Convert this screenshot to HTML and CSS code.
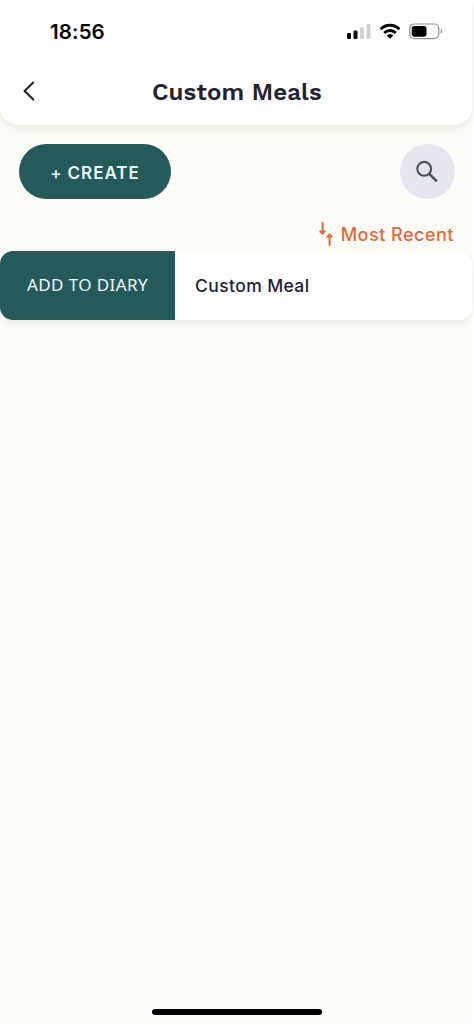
FILE: index.html
```
<!DOCTYPE html>
<html lang="en">
<head>
<meta charset="utf-8">
<title>Custom Meals</title>
<link rel="stylesheet" href="styles.css">
</head>
<body>
<div class="screen">
  <header class="header">
    <div class="status">
      <span class="time">18:56</span>
      <svg class="status-icons" width="98" height="20" viewBox="0 0 98 20">
        <rect x="1" y="13" width="4" height="6" rx="1.3"/>
        <rect x="7.5" y="10.5" width="4" height="8.5" rx="1.3"/>
        <rect x="14" y="7" width="4" height="12" rx="1.3" fill="#d0d0d0"/>
        <rect x="20.5" y="4" width="4" height="15" rx="1.3" fill="#d0d0d0"/>
        <g fill="none" stroke="#000" stroke-width="2.8">
          <path d="M34.6 9.2a13.2 13.2 0 0 1 18.8 0"/>
          <path d="M38.2 12.9a8.2 8.2 0 0 1 11.6 0"/>
        </g>
        <path d="M40.7 15.5a4.8 4.8 0 0 1 6.6 0L44 18.8z"/>
        <rect x="63.8" y="4" width="29" height="14.6" rx="4.4" fill="none" stroke="#929292" stroke-width="1.2"/>
        <rect x="65.7" y="5.9" width="14.8" height="10.8" rx="2.4"/>
        <path d="M94.6 9v4.8c2-.8 2-4 0-4.8z" fill="#999"/>
      </svg>
    </div>
    <div class="nav">
      <svg class="back" width="16" height="24" viewBox="0 0 16 24"><path d="M13.2 3.6 4.6 12l8.6 8.6" fill="none" stroke="#1f2233" stroke-width="2.1" stroke-linecap="round" stroke-linejoin="round"/></svg>
      <h1 class="title">Custom Meals</h1>
    </div>
  </header>
  <main class="content">
    <div class="actions">
      <button class="create"><span class="plus">+</span>CREATE</button>
      <button class="search" aria-label="Search">
        <svg width="26" height="26" viewBox="0 0 26 26" fill="none" stroke="#4b505b"><circle cx="10.2" cy="9.8" r="6.9" stroke-width="2.1"/><path d="m15 14.6 7.9 7.8" stroke-width="2.7"/></svg>
      </button>
    </div>
    <div class="sort">
      <svg width="18" height="26" viewBox="0 0 18 26" fill="none" stroke="#e2683f" stroke-width="2" stroke-linecap="round" stroke-linejoin="round"><path d="M5.6 2v10M12.6 24V14"/><path d="M2.8 10.2h5.6l-2.8 2.8zM9.8 15.8h5.6l-2.8-2.8z" fill="#e2683f" stroke-width="1.2"/></svg>
      <span class="sort-label">Most Recent</span>
    </div>
    <div class="meal">
      <div class="add"><span class="add-label">ADD TO DIARY</span></div>
      <div class="meal-name">Custom Meal</div>
    </div>
  </main>
  <div class="home"></div>
</div>
</body>
</html>
```
FILE: styles.css
```
* { box-sizing: border-box; }
body { margin: 0; background: #fff; font-family: Inter, sans-serif; color: #1f2233; }
.screen { width: 472px; height: 1024px; background: #fdfcf6; display: flex; flex-direction: column; }
.header { height: 125px; background: #fff; border-radius: 0 0 18px 18px; box-shadow: 0 3px 8px rgba(60,60,40,.10); }
.status { height: 62px; padding: 2px 28px 0 50px; display: flex; align-items: center; justify-content: space-between; }
.time { font-size: 20.5px; font-weight: 600; color: #000; line-height: 24px; letter-spacing: .1px; }
.status-icons { margin-top: -4px; }
.nav { height: 60px; display: flex; align-items: center; padding-left: 20px; }
.back { margin-top: -2px; }
.title { margin: 0 0 0 116px; font-family: "Work Sans", Inter, sans-serif; font-size: 24px; font-weight: 600; letter-spacing: .15px; line-height: 28px; white-space: nowrap; }
.content { flex: 1; }
.actions { display: flex; justify-content: space-between; padding: 19px 17.5px 0 19px; }
button { border: 0; padding: 0; font-family: inherit; }
.create { width: 152px; height: 55px; padding-top: 2px; border-radius: 28px; background: #255a5a; color: #effafa; font-size: 17px; font-weight: 600; letter-spacing: 1px; }
.plus { font-weight: 500; margin-right: 5px; }
.search { width: 55px; height: 55px; border-radius: 50%; background: #e6e6f1; display: flex; align-items: center; justify-content: center; }
.sort { height: 52px; padding: 18px 18px 0 0; display: flex; align-items: center; justify-content: flex-end; gap: 6px; color: #e2683f; }
.sort-label { font-size: 18px; font-weight: 450; letter-spacing: .5px; white-space: nowrap; }
.meal { height: 68.5px; background: #fff; display: flex; border-radius: 13px; overflow: hidden; box-shadow: 0 3px 8px rgba(60,60,40,.09); }
.add { width: 175px; background: #255a5a; color: #effafa; padding: 0 0 2px 27px; display: flex; align-items: center; }
.add-label { font-family: "Noto Sans", sans-serif; font-size: 17px; letter-spacing: .4px; white-space: nowrap; }
.meal-name { padding: 0 0 0 20px; display: flex; align-items: center; font-size: 17.5px; font-weight: 500; letter-spacing: .4px; }
.home { width: 170px; height: 6px; border-radius: 3px; background: #000; margin: 0 0 9px 152px; }
```
